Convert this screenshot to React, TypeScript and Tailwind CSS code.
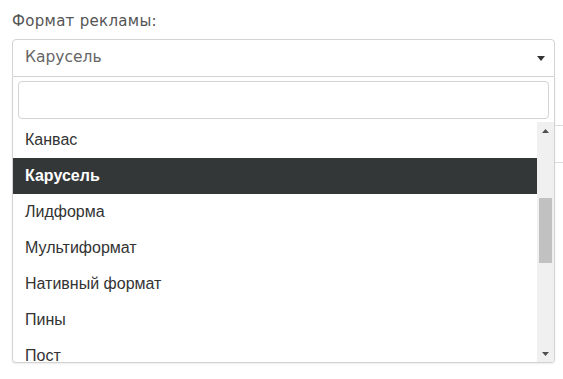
const options = [
  "Канвас",
  "Карусель",
  "Лидформа",
  "Мультиформат",
  "Нативный формат",
  "Пины",
  "Пост",
]

const selected = "Карусель"

export default function App() {
  return (
    <div className="min-h-[379px] w-[563px] overflow-hidden bg-white pl-3 pt-[11px]">
      <label className="block font-['DejaVu_Sans',sans-serif] text-[15px] leading-5 tracking-[0.3px] text-[#555]">
        Формат рекламы:
      </label>

      <div className="relative mt-2 w-[543px]">
        {/* выбранное значение */}
        <div className="flex h-[38px] items-center justify-between rounded-t border border-[#d3d3d3] bg-white pl-3 pr-[8px]">
          <span className="font-['DejaVu_Sans',sans-serif] text-[15.5px] text-[#666]">
            {selected}
          </span>
          <svg width="8" height="5" viewBox="0 0 8 5" className="mr-[1px]">
            <path d="M0 0h8L4 5z" fill="#333" />
          </svg>
        </div>

        {/* выпадающий список */}
        <div className="absolute left-0 right-0 top-full z-10 rounded-b border border-t-0 border-[#d3d3d3] bg-white shadow-[0_1px_2px_rgba(0,0,0,0.08)]">
          <div className="px-[5px] pt-1 pb-[3px]">
            <input
              className="h-[38px] w-full rounded border border-[#d3d3d3] bg-white px-2 outline-none"
              type="text"
            />
          </div>
          <div className="flex h-[240px]">
            <ul className="flex-1 overflow-hidden">
              {options.map((o) => (
                <li
                  key={o}
                  className={
                    o === selected
                      ? "flex h-9 items-center bg-[#333738] pl-3 font-['Liberation_Sans',sans-serif] text-[16px] font-bold text-white"
                      : "flex h-9 items-center pl-3 font-['Liberation_Sans',sans-serif] text-[16px] text-[#333]"
                  }
                >
                  {o}
                </li>
              ))}
            </ul>
            {/* полоса прокрутки */}
            <div className="flex w-[17px] flex-col items-center bg-[#f0f0f0]">
              <div className="flex h-[17px] items-center justify-center">
                <svg width="7" height="4" viewBox="0 0 7 4">
                  <path d="M3.5 0L7 4H0z" fill="#505050" />
                </svg>
              </div>
              <div className="mt-[59px] h-[65px] w-[13px] bg-[#c1c1c1]" />
              <div className="flex-1" />
              <div className="flex h-[17px] items-center justify-center">
                <svg width="7" height="4" viewBox="0 0 7 4">
                  <path d="M0 0h7L3.5 4z" fill="#505050" />
                </svg>
              </div>
            </div>
          </div>
        </div>
      </div>

      {/* следующее поле формы под списком */}
      <div className="mt-[48px] h-[38px] w-[600px] border-y border-[#dcdcdc]" />
    </div>
  )
}
